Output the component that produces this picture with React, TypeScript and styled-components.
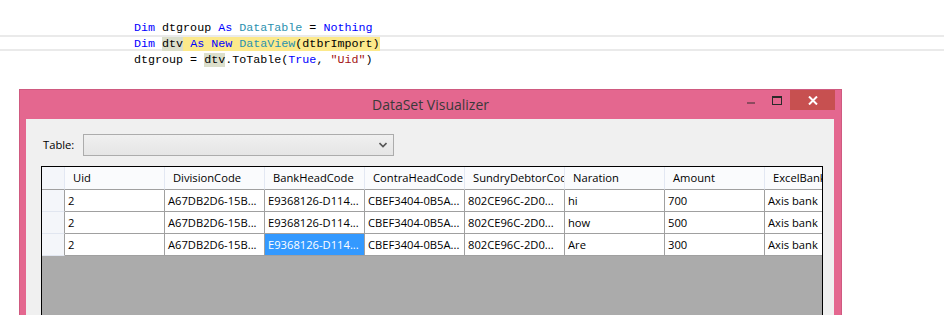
import React from "react"
import styled, { createGlobalStyle } from "styled-components"

const GlobalStyle = createGlobalStyle`
  html, body {
    margin: 0;
    padding: 0;
    background: #ffffff;
    overflow: hidden;
  }
`

const Page = styled.div`
  width: 944px;
  height: 315px;
  overflow: hidden;
  background: #ffffff;
`

/* code editor behind the window */
const Code = styled.div`
  padding-top: 19px;
  font-family: "Liberation Mono", monospace;
  font-size: 11.7px;
  color: #000000;
`

const CodeLine = styled.div<{ current?: boolean }>`
  box-sizing: border-box;
  height: 16px;
  line-height: 14px;
  padding-left: 134px;
  white-space: pre;
  border-top: 2px solid ${(p) => (p.current ? "#eaeaea" : "transparent")};
  border-bottom: 2px solid ${(p) => (p.current ? "#eaeaea" : "transparent")};
`

const Kw = styled.span`
  color: #0000ff;
`
const Type = styled.span`
  color: #2b91af;
`
const Str = styled.span`
  color: #a31515;
`
const Mark = styled.span<{ tone: "ref" | "yellow" }>`
  background: ${(p) => (p.tone === "ref" ? "#dcdfcb" : "#fce98b")};
`

/* the visualizer window */
const Window = styled.div`
  box-sizing: border-box;
  margin: 22px 0 0 19px;
  width: 823px;
  height: 260px;
  background: #e4678f;
  border: 1px solid #cf5a80;
  border-bottom: none;
  display: flex;
  flex-direction: column;
`

const TitleBar = styled.div`
  height: 29px;
  display: grid;
  grid-template-columns: 1fr auto 1fr;
  align-items: start;
`

const Title = styled.div`
  grid-column: 2;
  font-family: "Open Sans", "Noto Sans", sans-serif;
  font-size: 14px;
  line-height: 29px;
  color: #3a3a3a;
`

const Controls = styled.div`
  grid-column: 3;
  justify-self: end;
  display: flex;
  margin-right: 6px;
`

const CtrlButton = styled.div<{ close?: boolean }>`
  width: ${(p) => (p.close ? "45px" : "26px")};
  height: 20px;
  display: flex;
  align-items: center;
  justify-content: center;
  background: ${(p) => (p.close ? "#c75050" : "transparent")};
`

const Client = styled.div`
  flex: 1;
  margin: 0 7px 0 6px;
  background: #f0f0f0;
  padding: 15px 12px 0 15px;
  display: flex;
  flex-direction: column;
  gap: 10px;
  font-family: "Open Sans", "Noto Sans", sans-serif;
  font-size: 11.2px;
  color: #000000;
`

const TableRow = styled.div`
  display: flex;
  align-items: center;
  gap: 9px;
  padding-left: 2px;
`

const Label = styled.span`
  line-height: 22px;
`

const Combo = styled.div`
  box-sizing: border-box;
  width: 311px;
  height: 22px;
  border: 1px solid #acacac;
  background: linear-gradient(#f0f0f0, #e5e5e5);
  display: flex;
  align-items: center;
  justify-content: flex-end;
  padding-right: 6px;
`

const Grid = styled.div`
  box-sizing: border-box;
  width: 782px;
  height: 200px;
  border: 1px solid #000000;
  border-bottom: none;
  background: #ababab;
  overflow: hidden;
`

const Row = styled.div<{ header?: boolean }>`
  display: flex;
  height: ${(p) => (p.header ? "23px" : "22px")};
`

const Corner = styled.div<{ header?: boolean }>`
  box-sizing: border-box;
  flex: 0 0 23px;
  background: #f4f6fa;
  border-right: 1px solid ${(p) => (p.header ? "#e3e8f3" : "#a0a0a0")};
  border-bottom: 1px solid ${(p) => (p.header ? "#a0a0a0" : "#e1e6f0")};
`

const HeadCell = styled.div`
  box-sizing: border-box;
  flex: 0 0 100px;
  padding-left: 8px;
  background: #fafbfd;
  border-right: 1px solid #e3e8f3;
  border-bottom: 1px solid #a0a0a0;
  line-height: 22px;
  white-space: nowrap;
  overflow: hidden;
`

const Cell = styled.div<{ selected?: boolean }>`
  box-sizing: border-box;
  flex: 0 0 100px;
  padding-left: 3px;
  background: ${(p) => (p.selected ? "#3399ff" : "#ffffff")};
  color: ${(p) => (p.selected ? "#ffffff" : "#000000")};
  border-right: 1px solid #a0a0a0;
  border-bottom: 1px solid #a0a0a0;
  line-height: 21px;
  white-space: nowrap;
  overflow: hidden;
`

const columns = [
  "Uid",
  "DivisionCode",
  "BankHeadCode",
  "ContraHeadCode",
  "SundryDebtorCode",
  "Naration",
  "Amount",
  "ExcelBank",
]

const rows = [
  ["2", "A67DB2D6-15B...", "E9368126-D114...", "CBEF3404-0B5A...", "802CE96C-2D0...", "hi", "700", "Axis bank"],
  ["2", "A67DB2D6-15B...", "E9368126-D114...", "CBEF3404-0B5A...", "802CE96C-2D0...", "how", "500", "Axis bank"],
  ["2", "A67DB2D6-15B...", "E9368126-D114...", "CBEF3404-0B5A...", "802CE96C-2D0...", "Are", "300", "Axis bank"],
]

export default function App() {
  return (
    <Page>
      <GlobalStyle />
      <Code>
        <CodeLine>
          <Kw>Dim</Kw> dtgroup <Kw>As</Kw> <Type>DataTable</Type> = <Kw>Nothing</Kw>
        </CodeLine>
        <CodeLine current>
          <Kw>Dim</Kw> <Mark tone="ref">dtv</Mark>
          <Mark tone="yellow">
            {" "}
            <Kw>As</Kw> <Kw>New</Kw> <Type>DataView</Type>(dtbrImport)
          </Mark>
        </CodeLine>
        <CodeLine>
          dtgroup = <Mark tone="ref">dtv</Mark>.ToTable(<Kw>True</Kw>, <Str>"Uid"</Str>)
        </CodeLine>
      </Code>

      <Window>
        <TitleBar>
          <Title>DataSet Visualizer</Title>
          <Controls>
            <CtrlButton>
              <svg width="10" height="10" viewBox="0 0 10 10">
                <rect x="1" y="7" width="8" height="2" fill="#8c4a5e" />
              </svg>
            </CtrlButton>
            <CtrlButton>
              <svg width="10" height="9" viewBox="0 0 10 9">
                <rect x="0.5" y="0.5" width="9" height="8" fill="none" stroke="#2a2a2a" />
                <rect x="0" y="0" width="10" height="2" fill="#2a2a2a" />
              </svg>
            </CtrlButton>
            <CtrlButton close>
              <svg width="10" height="9" viewBox="0 0 10 9">
                <path d="M1 0.5 L9 8.5 M9 0.5 L1 8.5" stroke="#ffffff" strokeWidth="2" />
              </svg>
            </CtrlButton>
          </Controls>
        </TitleBar>

        <Client>
          <TableRow>
            <Label>Table:</Label>
            <Combo>
              <svg width="8" height="6" viewBox="0 0 8 6">
                <path d="M0.5 1 L4 4.5 L7.5 1" fill="none" stroke="#555555" strokeWidth="1.6" />
              </svg>
            </Combo>
          </TableRow>

          <Grid>
            <Row header>
              <Corner header />
              {columns.map((c) => (
                <HeadCell key={c}>{c}</HeadCell>
              ))}
            </Row>
            {rows.map((r, i) => (
              <Row key={i}>
                <Corner />
                {r.map((v, j) => (
                  <Cell key={j} selected={i === 2 && j === 2}>
                    {v}
                  </Cell>
                ))}
              </Row>
            ))}
          </Grid>
        </Client>
      </Window>
    </Page>
  )
}
